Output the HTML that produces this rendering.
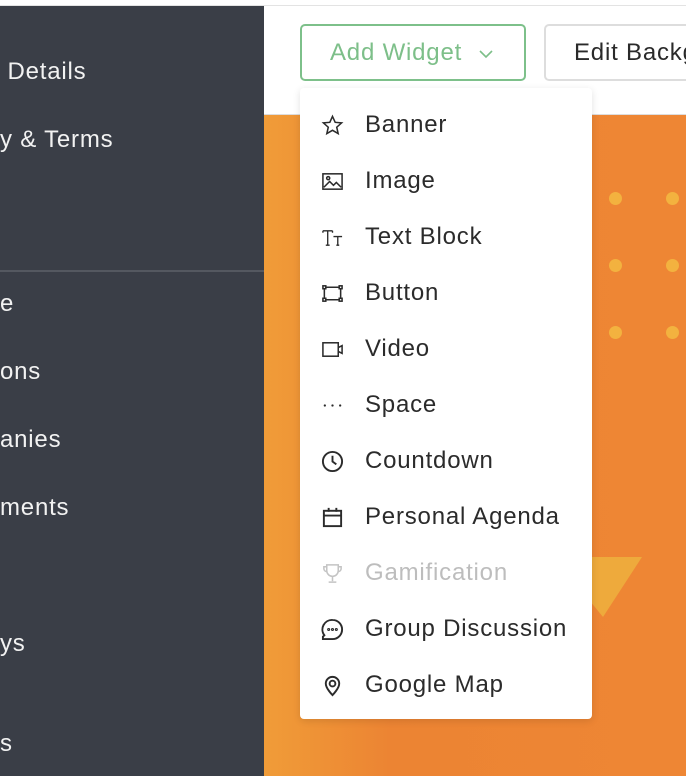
<!DOCTYPE html>
<html><head><meta charset="utf-8"><style>
*{margin:0;padding:0;box-sizing:border-box}
body{width:686px;height:776px;overflow:hidden;position:relative;background:#fff;font-family:"Liberation Sans","DejaVu Sans",sans-serif}
.top{position:absolute;left:0;top:0;width:686px;height:6px;background:#fff;border-bottom:1px solid #e3e3e3}
.side{position:absolute;left:0;top:6px;width:264px;height:770px;background:#3a3e47;color:#f2f2f2;font-size:24px;letter-spacing:0.8px}
.side div{position:absolute;left:0;white-space:nowrap}
.div{position:absolute;left:0;top:264px;width:264px;height:2px;background:#545860}
.head{position:absolute;left:264px;top:6px;width:422px;height:109px;background:#fff;border-bottom:1px solid #ddd}
.orange{position:absolute;left:264px;top:115px;width:422px;height:661px;background:linear-gradient(90deg,#f09c38 0%,#ec8433 30%,#ee8634 100%)}
.dot{position:absolute;width:13px;height:13px;border-radius:50%;background:#f3b23f}
.btn1{position:absolute;left:300px;top:24px;width:226px;height:57px;border:2px solid #7dc08a;border-radius:5px;color:#7dbf89;font-size:24px;letter-spacing:0.8px;padding-left:28px;line-height:53px;white-space:nowrap}
.btn2{position:absolute;left:544px;top:24px;width:142px;height:57px;border:2px solid #ddd;border-right:none;border-radius:5px 0 0 5px;color:#2a2a2a;font-size:24px;letter-spacing:0.8px;padding-left:28px;line-height:53px;white-space:nowrap;background:#fff;overflow:hidden}
.menu{position:absolute;left:300px;top:88px;width:292px;height:631px;background:#fff;border-radius:4px;box-shadow:0 2px 8px rgba(0,0,0,.12)}
.it{position:absolute;left:0;height:56px;width:292px;font-size:24px;letter-spacing:0.8px;color:#2b2b2b;line-height:56px;white-space:nowrap}
.it span{position:absolute;left:65px}
.it svg{position:absolute;left:21px;top:17px;width:23px;height:23px;fill:none;stroke:#2b2b2b;stroke-width:1.6}
.dis{color:#bdbdbd}.dis svg{stroke:#c4c4c4}
</style></head><body>
<div class="top"></div>
<div class="side">
<div style="top:52px">&nbsp;Details</div>
<div style="top:120px">y &amp; Terms</div>
<div class="div"></div>
<div style="top:284px">e</div>
<div style="top:352px">ons</div>
<div style="top:420px">anies</div>
<div style="top:488px">ments</div>
<div style="top:624px">ys</div>
<div style="top:724px">s</div>
</div>
<div class="head"></div>
<div class="orange">
<div class="dot" style="left:345px;top:77px"></div><div class="dot" style="left:402px;top:77px"></div>
<div class="dot" style="left:345px;top:144px"></div><div class="dot" style="left:402px;top:144px"></div>
<div class="dot" style="left:345px;top:211px"></div><div class="dot" style="left:402px;top:211px"></div>
<svg style="position:absolute;left:0;top:0" width="422" height="661"><polygon points="290,442 378,442 339,502" fill="#eeaa3c"/></svg>
</div>
<div class="btn1">Add Widget <svg width="16" height="12" style="margin-left:8px" viewBox="0 0 16 12"><path d="M2 3l6 6 6-6" fill="none" stroke="#7dbf89" stroke-width="1.6"/></svg></div>
<div class="btn2">Edit Background</div>
<div class="menu">
<div class="it" style="top:9px"><svg viewBox="0 0 24 24"><path d="M12 2.5l2.8 6.2 6.7.6-5.1 4.5 1.5 6.6L12 17l-5.9 3.4 1.5-6.6-5.1-4.5 6.7-.6z"/></svg><span>Banner</span></div>
<div class="it" style="top:65px"><svg viewBox="0 0 24 24"><rect x="2" y="4" width="20" height="16"/><circle cx="7.5" cy="8.5" r="1.6"/><path d="M3 18l6-6 4 4 3-3 5 5"/></svg><span>Image</span></div>
<div class="it" style="top:121px"><svg viewBox="0 0 24 24" style="stroke-width:1.4"><path d="M2 5h10M7 5v15M5 20h4M2 5v2M12 5v2M13 11h9M17.5 11v9M16 20h3"/></svg><span>Text Block</span></div>
<div class="it" style="top:177px"><svg viewBox="0 0 24 24"><rect x="2" y="4" width="3" height="3"/><rect x="19" y="4" width="3" height="3"/><rect x="2" y="17" width="3" height="3"/><rect x="19" y="17" width="3" height="3"/><path d="M5 5.5h14M5 18.5h14M3.5 7v10M20.5 7v10"/></svg><span>Button</span></div>
<div class="it" style="top:233px"><svg viewBox="0 0 24 24"><rect x="2" y="5" width="16" height="14"/><path d="M18 10l4-2v8l-4-2"/></svg><span>Video</span></div>
<div class="it" style="top:289px"><svg viewBox="0 0 24 24" style="stroke:none;fill:#2b2b2b"><circle cx="4" cy="12" r="1.2"/><circle cx="12" cy="12" r="1.2"/><circle cx="20" cy="12" r="1.2"/></svg><span>Space</span></div>
<div class="it" style="top:345px"><svg viewBox="0 0 24 24" style="stroke-width:2"><circle cx="12" cy="12" r="10"/><path d="M12 6v6l4 3"/></svg><span>Countdown</span></div>
<div class="it" style="top:401px"><svg viewBox="0 0 24 24" style="stroke-width:2"><rect x="3" y="5" width="18" height="16"/><path d="M3 10h18M8 2v4M16 2v4"/></svg><span>Personal Agenda</span></div>
<div class="it dis" style="top:457px"><svg viewBox="0 0 24 24"><path d="M6 3h12v6a6 6 0 01-12 0zM6 5H3v2a3 3 0 003 3M18 5h3v2a3 3 0 01-3 3M12 15v5M8 21h8"/></svg><span>Gamification</span></div>
<div class="it" style="top:513px"><svg viewBox="0 0 24 24" style="stroke-width:2"><path d="M12 2a10 10 0 110 20H2v-2.5l1.5-1.5A10 10 0 0112 2z"/><circle cx="8" cy="12" r=".6"/><circle cx="12" cy="12" r=".6"/><circle cx="16" cy="12" r=".6"/></svg><span>Group Discussion</span></div>
<div class="it" style="top:569px"><svg viewBox="0 0 24 24" style="stroke-width:2"><path d="M12 22s-7-7-7-12a7 7 0 0114 0c0 5-7 12-7 12z"/><circle cx="12" cy="10" r="3"/></svg><span>Google Map</span></div>
</div>
</body></html>
